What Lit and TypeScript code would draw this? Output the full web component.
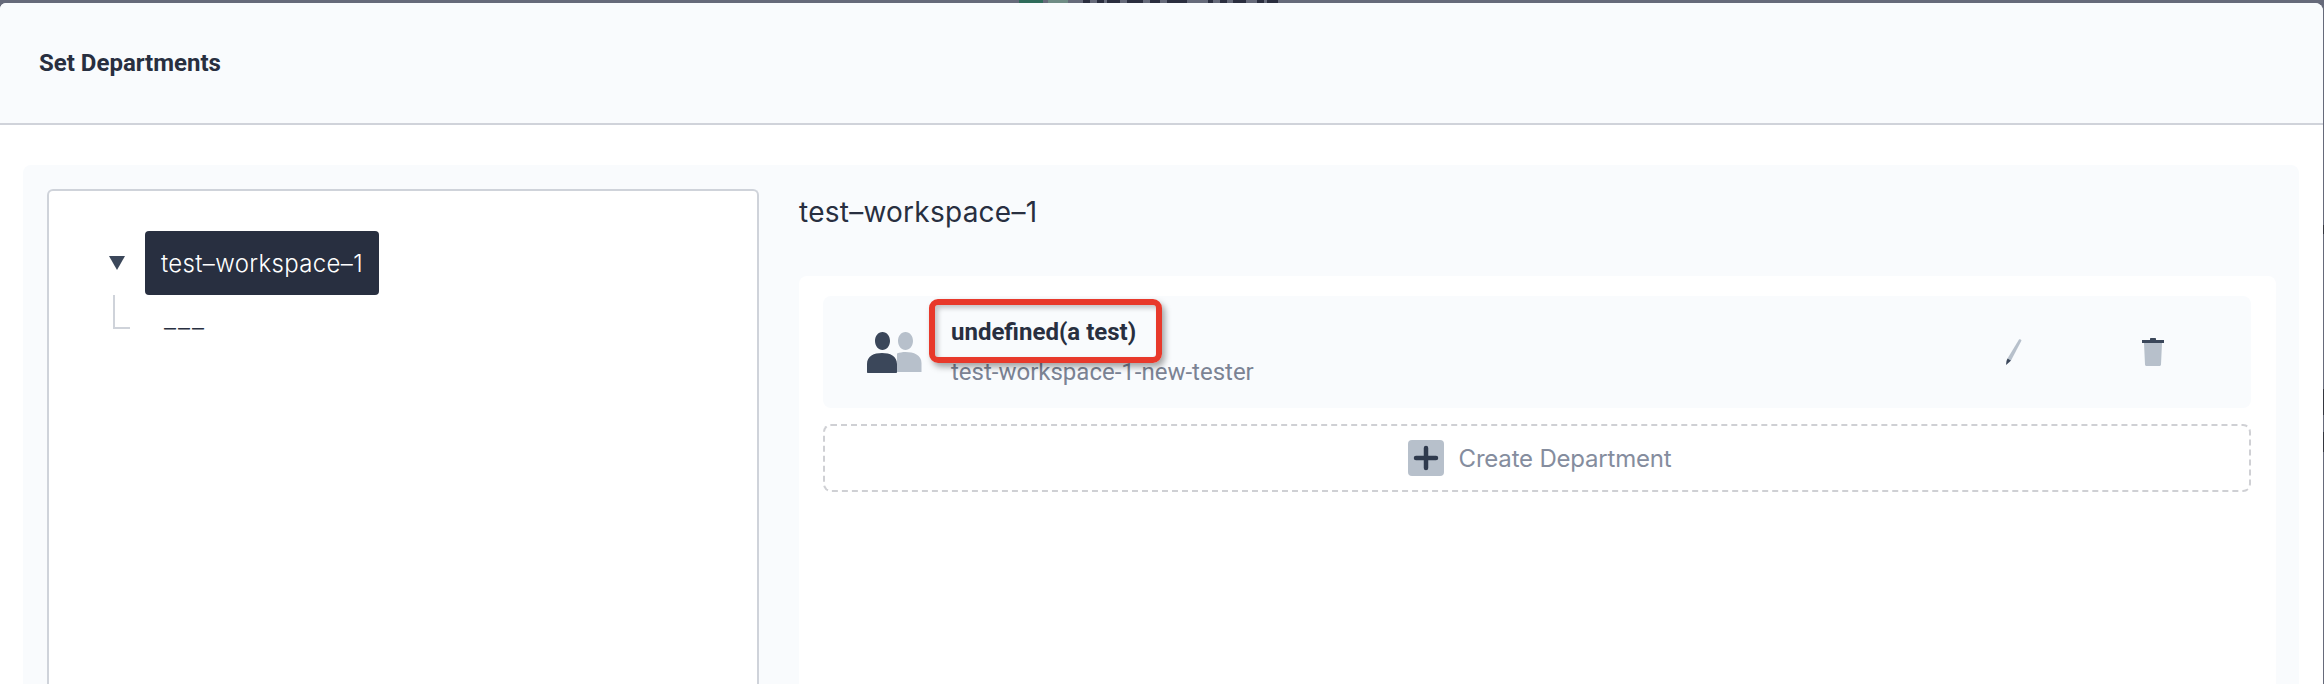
import { LitElement, html, css } from "lit";
import { customElement } from "lit/decorators.js";

const TOP_DARK: [number, number][] = [[1083, 7], [1097, 7], [1107, 13], [1127, 16], [1150, 10], [1167, 20], [1208, 5], [1220, 7], [1233, 13], [1257, 7], [1267, 11]];
const EDGE_DARK: [number, number][] = [[225, 9], [389, 26], [432, 20]];

@customElement("app-root")
export class AppRoot extends LitElement {
  static styles = css`
    :host { display: block; width: 2324px; height: 684px; overflow: hidden; position: relative; background: #666a7a; font-family: Inter, "Noto Sans", sans-serif; color: #282f40; }
    .bit { position: absolute; top: 0; height: 3px; background: #2a2d3e; }
    .bit.green { background: #2f6b5a; }
    .bit.pale { background: #6f8c85; }
    .edge { position: absolute; left: 2323px; width: 1px; background: #34363f; }
    .modal { margin-top: 3px; margin-right: 1px; height: 681px; background: #fff; border-radius: 6px 8px 0 0; overflow: hidden; display: flex; flex-direction: column; position: relative; }
    .header { height: 120px; flex: none; background: #f9fbfd; border-bottom: 2px solid #d0d3da; display: flex; align-items: center; padding-left: 39px; font: 700 24px Roboto, sans-serif; }
    .body { flex: 1; padding: 40px 24px 0 23px; display: flex; min-height: 0; }
    .panel { flex: 1; background: #f9fbfd; border-radius: 8px 8px 0 0; display: flex; padding: 24px 23px 0 24px; gap: 40px; }
    .tree { width: 712px; flex: none; box-sizing: border-box; background: #fff; border: 2px solid #cfd3da; border-bottom: none; border-radius: 6px 6px 0 0; padding: 40px 0 0 60px; }
    .tree-row { display: flex; align-items: center; gap: 20px; }
    .tri { width: 16px; height: 14px; flex: none; }
    .node { background: #282f40; color: #fff; height: 64px; padding: 0 16px; display: flex; align-items: center; border-radius: 4px; font-size: 24px; font-weight: 300; letter-spacing: 0.35px; }
    .child { display: flex; align-items: flex-end; margin-left: 4px; height: 34px; }
    .elbow { width: 15px; height: 32px; border-left: 2px solid #cfd3da; border-bottom: 2px solid #cfd3da; flex: none; }
    .dash { margin-left: 34px; font-size: 24px; font-weight: 300; line-height: 2px; letter-spacing: 2px; }
    .right { flex: 1; display: flex; flex-direction: column; min-width: 0; }
    .title { height: 87px; font-size: 28px; font-weight: 400; line-height: 46px; letter-spacing: 0.25px; }
    .card { flex: 1; background: #fff; border-radius: 8px 8px 0 0; padding: 20px 25px 0 24px; display: flex; flex-direction: column; gap: 16px; }
    .row { height: 112px; flex: none; background: #f9fbfd; border-radius: 8px; display: flex; align-items: center; position: relative; }
    .people { margin-left: 44px; width: 55px; height: 41px; flex: none; margin-top: 1px; }
    .text { margin-left: 29px; flex: 1; display: flex; flex-direction: column; gap: 8px; font-family: Roboto, sans-serif; font-size: 24px; }
    .name { font-weight: 700; line-height: 32px; }
    .sub { color: #7b8394; line-height: 32px; }
    .mark { position: absolute; left: 106px; top: 3px; width: 233px; height: 64px; box-sizing: border-box; border: 6px solid #e8392b; border-radius: 9px; box-shadow: 3px 4px 6px rgba(0,0,0,.35), inset 3px 3px 5px rgba(0,0,0,.22); }
    .edit { width: 16px; height: 26px; flex: none; margin-right: 120px; }
    .trash { width: 22px; height: 28px; flex: none; margin-right: 87px; }
    .create { height: 68px; box-sizing: border-box; flex: none; border: 2px dashed #cfd0d4; border-radius: 8px; padding-left: 5px; display: flex; align-items: center; justify-content: center; gap: 15px; color: #858d9e; font-size: 24px; font-weight: 400; letter-spacing: -0.2px; }
    .plus { width: 36px; height: 36px; flex: none; }
  `;

  render() {
    return html`
      <div class="bit green" style="left:1019px;width:24px"></div>
      <div class="bit pale" style="left:1048px;width:20px"></div>
      ${TOP_DARK.map(([x, w]) => html`<div class="bit" style="left:${x}px;width:${w}px"></div>`)}
      ${EDGE_DARK.map(([y, h]) => html`<div class="edge" style="top:${y}px;height:${h}px"></div>`)}
      <div class="modal">
      <div class="header">Set Departments</div>
      <div class="body"><div class="panel">
        <div class="tree">
          <div class="tree-row">
            <svg class="tri" viewBox="0 0 16 14"><path d="M0 0H16L8 14Z" fill="#3b475a"/></svg>
            <div class="node">test–workspace–1</div>
          </div>
          <div class="child"><div class="elbow"></div><div class="dash">–––</div></div>
        </div>
        <div class="right">
          <div class="title">test–workspace–1</div>
          <div class="card">
            <div class="row">
              <svg class="people" viewBox="0 0 55 41"><path fill="#b7c0cb" d="M31 9c0-5 3-9 7.500-9S46 4 46 9s-3.500 9-7.500 9S31 14 31 9zM30 21.500c3-1 5-1.500 8.500-1.500 8 0 16 3 16 11v9H30z"/><path fill="#3b475a" d="M8 9c0-5 3-9 7.500-9S23 4 23 9s-3.500 9-7.500 9S8 14 8 9zM0 32c0-8 7-11 15-11s15 3 15 11v8c0 .6-.4 1-1 1H1c-.6 0-1-.4-1-1z"/></svg>
              <div class="text"><div class="name">undefined(a test)</div><div class="sub">test-workspace-1-new-tester</div></div>
              <svg class="edit" viewBox="0 0 16 26"><path d="M13 0.500c.8-.6 2.600.2 2.400 1.300L5 21.500 1.500 19.600z" fill="#b7c0cb"/><path d="M1.500 19.600 5 21.500 3.500 23 0 26 .5 22z" fill="#3b475a"/></svg>
              <svg class="trash" viewBox="0 0 22 28"><path d="M8 1c0-.6.400-1 1-1h4c.6 0 1 .4 1 1v1h8v3H0V2h8z" fill="#3b475a"/><path d="M2 5h18l-1 21.500c0 .8-.7 1.500-1.500 1.500h-13C3.700 28 3 27.300 3 26.500z" fill="#b7c0cb"/></svg>
              <div class="mark"></div>
            </div>
            <div class="create">
              <svg class="plus" viewBox="0 0 36 36"><rect width="36" height="36" rx="4" fill="#b7c0cb"/><path d="M8 18H28M18 8V28" stroke="#2f3a4d" stroke-width="4.500" stroke-linecap="round" fill="none"/></svg>
              <span>Create Department</span>
            </div>
          </div>
        </div>
      </div></div>
    </div>`;
  }
}
